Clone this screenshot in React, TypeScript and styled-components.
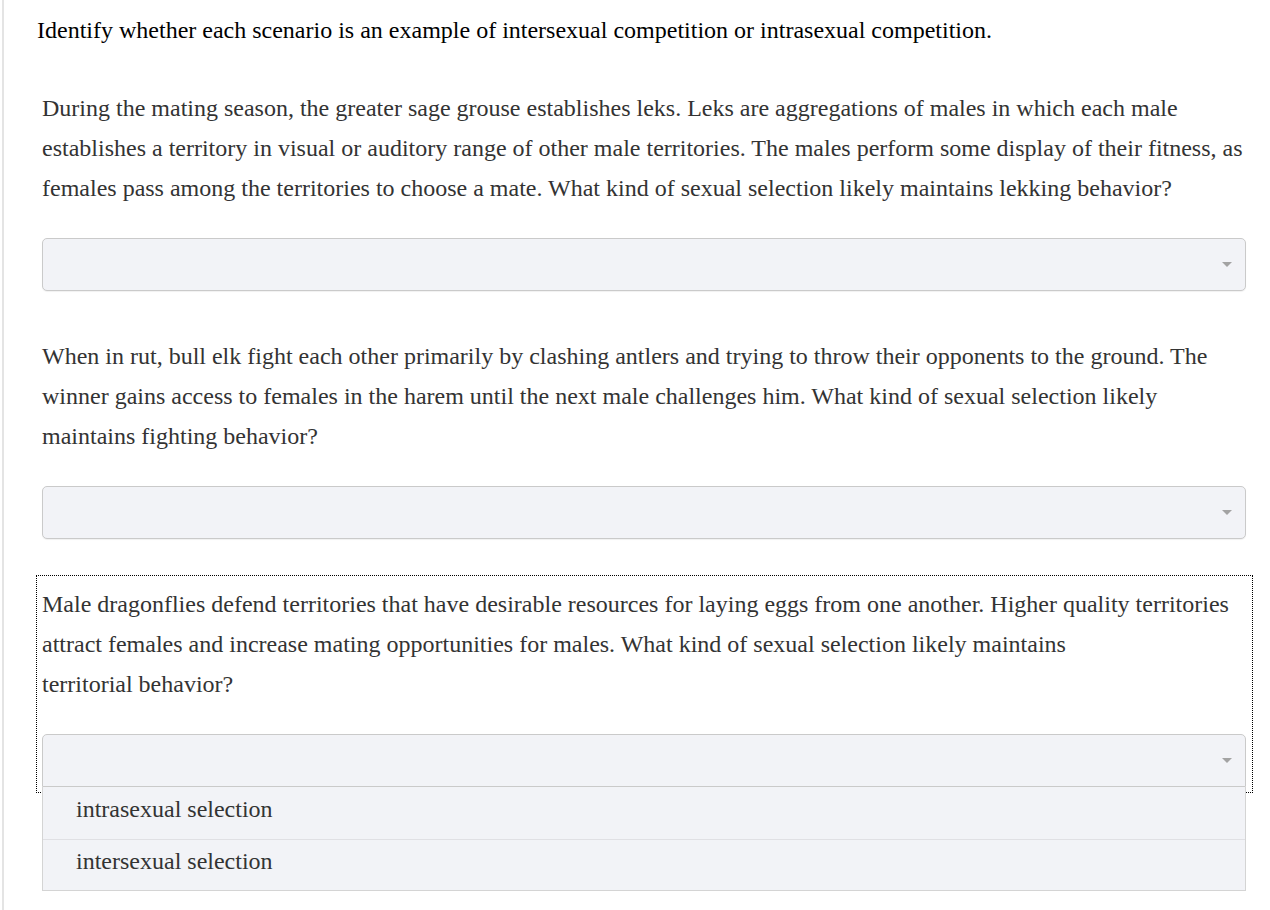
import React from "react";
import styled, { createGlobalStyle } from "styled-components";

const Global = createGlobalStyle`
  html, body { margin: 0; padding: 0; background: #fff; }
  body { font-family: "Liberation Serif", "Times New Roman", serif; }
`;

const Page = styled.div`
  margin-left: 2px;
  border-left: 2px solid #e4e4e4;
  min-height: 910px;
  box-sizing: border-box;
  padding: 10px 0 0 33px;
  width: 1250px;
`;

const Title = styled.div`
  font-size: 24px;
  line-height: 40px;
  color: #000;
  margin-bottom: 30px;
`;

const Question = styled.div<{ $focused?: boolean }>`
  position: relative;
  padding: 8px 6px 5px 5px;
  margin-bottom: 32px;
  outline: ${(p) => (p.$focused ? "1px dotted #000" : "none")};
`;

const Prompt = styled.div`
  font-size: 24px;
  line-height: 40px;
  color: #333;
`;

const Select = styled.div<{ $open?: boolean }>`
  margin-top: 30px;
  height: 53px;
  box-sizing: border-box;
  background: #f2f3f7;
  border: 1px solid #cacaca;
  border-radius: ${(p) => (p.$open ? "5px 5px 0 0" : "5px")};
  box-shadow: ${(p) => (p.$open ? "none" : "0 1px 1px rgba(0, 0, 0, 0.06)")};
  display: flex;
  align-items: center;
  justify-content: flex-end;
  padding-right: 13px;
`;

const Arrow = styled.span`
  width: 0;
  height: 0;
  border-left: 5px solid transparent;
  border-right: 5px solid transparent;
  border-top: 5px solid #a3a3a3;
`;

const Menu = styled.ul`
  position: absolute;
  left: 5px;
  right: 6px;
  top: 100%;
  margin: -5px 0 0;
  padding: 0;
  list-style: none;
  background: #f2f3f7;
  border: 1px solid #d4d4d4;
  border-top: none;
  z-index: 2;
`;

const Option = styled.li`
  height: 52px;
  box-sizing: border-box;
  display: flex;
  align-items: center;
  padding: 0 0 7px 33px;
  font-size: 24px;
  color: #333;
  & + & {
    height: 51px;
    border-top: 1px solid #e0e0e4;
  }
`;

function Dropdown({ open }: { open?: boolean }) {
  return (
    <Select $open={open}>
      <Arrow />
    </Select>
  );
}

export default function App() {
  return (
    <>
      <Global />
      <Page>
        <Title>
          Identify whether each scenario is an example of intersexual competition or intrasexual
          competition.
        </Title>
        <Question>
          <Prompt>
            During the mating season, the greater sage grouse establishes leks. Leks are
            aggregations of males in which each male establishes a territory in visual or auditory
            range of other male territories. The males perform some display of their fitness, as
            females pass among the territories to choose a mate. What kind of sexual selection
            likely maintains lekking behavior?
          </Prompt>
          <Dropdown />
        </Question>
        <Question>
          <Prompt>
            When in rut, bull elk fight each other primarily by clashing antlers and trying to throw
            their opponents to the ground. The winner gains access to females in the harem until the
            next male challenges him. What kind of sexual selection likely maintains fighting
            behavior?
          </Prompt>
          <Dropdown />
        </Question>
        <Question $focused>
          <Prompt>
            Male dragonflies defend territories that have desirable resources for laying eggs from
            one another. Higher quality territories attract females and increase mating
            opportunities for males. What kind of sexual selection likely maintains
            <br />
            territorial behavior?
          </Prompt>
          <Dropdown open />
          <Menu>
            <Option>intrasexual selection</Option>
            <Option>intersexual selection</Option>
          </Menu>
        </Question>
      </Page>
    </>
  );
}
